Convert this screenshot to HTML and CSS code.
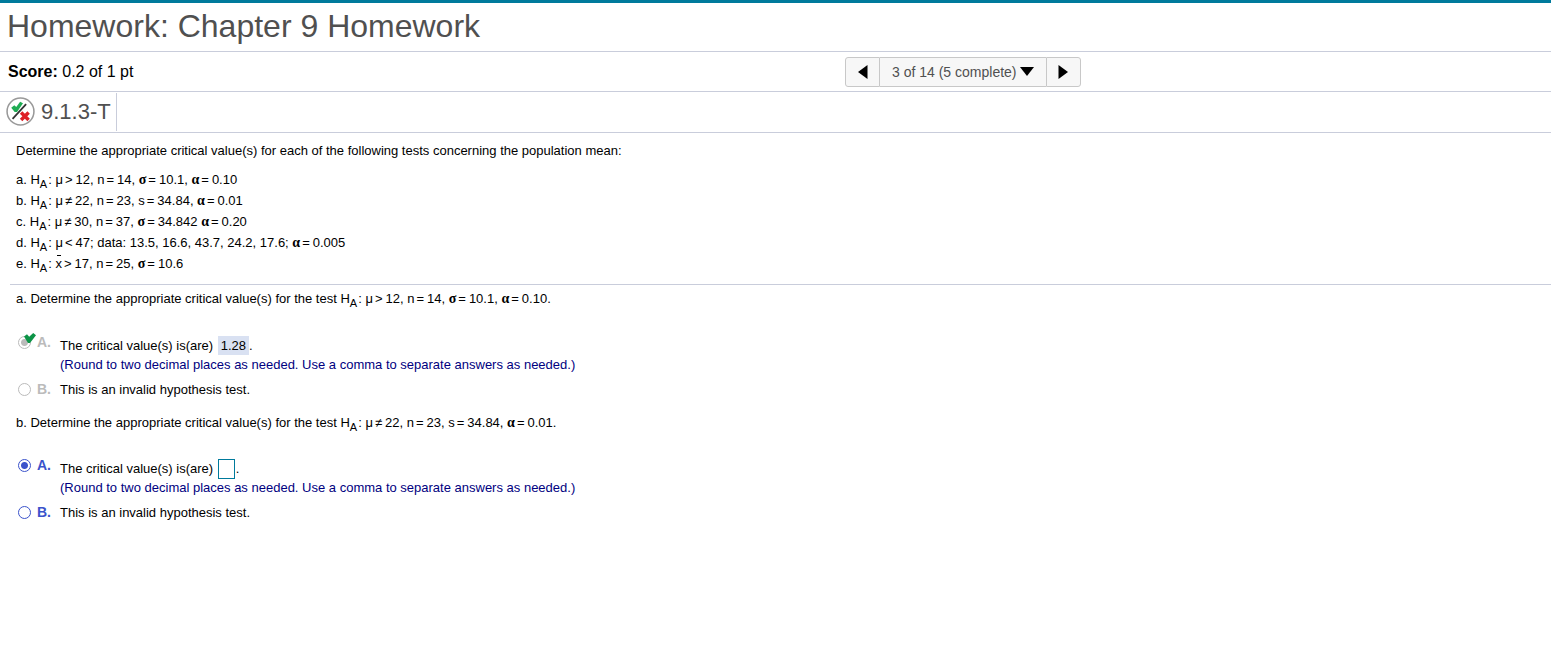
FILE: index.html
```html
<!DOCTYPE html>
<html lang="en">
<head>
<meta charset="utf-8">
<title>Homework: Chapter 9 Homework</title>
<link rel="stylesheet" href="styles.css">
</head>
<body>
<header class="title-bar"><h1>Homework: Chapter 9 Homework</h1></header>
<div class="score-bar">
  <p class="score"><b>Score:</b> 0.2 of 1 pt</p>
  <nav class="pager" aria-label="Questions">
    <button type="button" aria-label="Previous question"><svg width="10" height="14" viewBox="0 0 10 14"><path d="M9.5 0v14L0 7z"/></svg></button>
    <button type="button" class="pager-list">3 of 14 (5 complete)<svg width="14" height="9" viewBox="0 0 14 9"><path d="M0 0h14L7 9z"/></svg></button>
    <button type="button" aria-label="Next question"><svg width="10" height="14" viewBox="0 0 10 14"><path d="M.5 0v14L10 7z"/></svg></button>
  </nav>
</div>
<div class="question-bar">
  <h2 class="question-id">
    <svg width="29" height="29" viewBox="0 0 30 30" fill="none" aria-hidden="true">
      <circle cx="15" cy="15" r="13.9" fill="#fff" stroke="#999" stroke-width="1.6"/>
      <path d="M5.4 11.2l3.2-2.6 2 1.8L14.6 5l3 1.4-6.2 9H9z" fill="#20ac54"/>
      <path d="M6.8 22.6L20.8 7.4" stroke="#333" stroke-width="1.8"/>
      <path d="M15.6 16.1l7.8 7.8m0-7.8l-7.8 7.8" stroke="#de2027" stroke-width="3.6"/>
    </svg>
    <span>9.1.3-T</span>
  </h2>
</div>
<main>
  <section class="problem">
    <p class="intro">Determine the appropriate critical value(s) for each of the following tests concerning the population mean:</p>
    <p class="test">a. H<sub>A</sub>: μ<i class="op">&gt;</i>12, n<i class="op">=</i>14, <i class="greek">σ</i><i class="op">=</i>10.1, <i class="greek">α</i><i class="op">=</i>0.10</p>
    <p class="test">b. H<sub>A</sub>: μ<i class="op">≠</i>22, n<i class="op">=</i>23, s<i class="op">=</i>34.84, <i class="greek">α</i><i class="op">=</i>0.01</p>
    <p class="test">c. H<sub>A</sub>: μ<i class="op">≠</i>30, n<i class="op">=</i>37, <i class="greek">σ</i><i class="op">=</i>34.842 <i class="greek">α</i><i class="op">=</i>0.20</p>
    <p class="test">d. H<sub>A</sub>: μ<i class="op">&lt;</i>47; data: 13.5, 16.6, 43.7, 24.2, 17.6; <i class="greek">α</i><i class="op">=</i>0.005</p>
    <p class="test">e. H<sub>A</sub>: <span class="mean">x</span><i class="op">&gt;</i>17, n<i class="op">=</i>25, <i class="greek">σ</i><i class="op">=</i>10.6</p>
  </section>
  <section class="part">
    <p class="prompt">a. Determine the appropriate critical value(s) for the test H<sub>A</sub>: μ<i class="op">&gt;</i>12, n<i class="op">=</i>14, <i class="greek">σ</i><i class="op">=</i>10.1, <i class="greek">α</i><i class="op">=</i>0.10.</p>
    <div class="choice done">
      <span class="mark"><input type="radio" name="part-a" id="a1" checked disabled><svg class="check" width="12" height="11" viewBox="0 0 12 11"><path d="M0 3.4L3 1.2l2.2 2.6L9.2 0 12 2.2 6 10H4z" fill="#0c9447"/></svg></span>
      <label for="a1">A.</label>
      <div class="answer"><p>The critical value(s) is(are) <span class="value">1.28</span>.</p><p class="hint">(Round to two decimal places as needed. Use a comma to separate answers as needed.)</p></div>
    </div>
    <div class="choice done">
      <span class="mark"><input type="radio" name="part-a" id="a2" disabled></span>
      <label for="a2">B.</label>
      <p class="plain">This is an invalid hypothesis test.</p>
    </div>
  </section>
  <section class="part">
    <p class="prompt">b. Determine the appropriate critical value(s) for the test H<sub>A</sub>: μ<i class="op">≠</i>22, n<i class="op">=</i>23, s<i class="op">=</i>34.84, <i class="greek">α</i><i class="op">=</i>0.01.</p>
    <div class="choice">
      <span class="mark"><input type="radio" name="part-b" id="b1" checked></span>
      <label for="b1">A.</label>
      <div class="answer"><p>The critical value(s) is(are) <input class="entry" type="text" aria-label="Critical values">.</p><p class="hint">(Round to two decimal places as needed. Use a comma to separate answers as needed.)</p></div>
    </div>
    <div class="choice">
      <span class="mark"><input type="radio" name="part-b" id="b2"></span>
      <label for="b2">B.</label>
      <p class="plain">This is an invalid hypothesis test.</p>
    </div>
  </section>
</main>
</body>
</html>
```
FILE: styles.css
```css
* { box-sizing: border-box; }
body {
  margin: 0;
  background: #fff;
  color: #000;
  font: 13px/19px "Liberation Sans", Arial, sans-serif;
}
h1, h2, p { margin: 0; font-weight: normal; }
.title-bar {
  border-top: 3px solid #007a9c;
  border-bottom: 1px solid #c9cddb;
  padding: 5px 7px 6px;
}
h1 { font-size: 32px; line-height: 37px; color: #505050; }
.score-bar {
  display: grid;
  grid-template-columns: 845fr 706fr;
  align-items: center;
  height: 40px;
  border-bottom: 1px solid #c9cddb;
}
.score { padding-left: 8px; font-size: 16px; }
.pager { display: flex; }
.pager button {
  display: flex;
  align-items: center;
  justify-content: center;
  gap: 3px;
  width: 35px;
  height: 30px;
  padding: 0;
  border: 1px solid #c8c8c8;
  background: #f7f7f7;
  color: #505050;
  font: 14px "Liberation Sans", Arial, sans-serif;
}
.pager button:first-child { border-radius: 3px 0 0 3px; }
.pager button:last-child { border-radius: 0 3px 3px 0; }
.pager .pager-list { width: auto; padding: 0 12px; border-width: 1px 0; }
.question-bar { display: flex; height: 41px; border-bottom: 1px solid #c9cddb; }
.question-id {
  display: flex;
  align-items: center;
  gap: 6px;
  margin: 1px 0;
  padding: 0 5px 2px 6px;
  border-right: 1px solid #c9cddb;
  font-size: 22px;
  color: #505050;
}
main { padding-left: 10px; }
.problem { padding: 8px 6px 10px; border-bottom: 1px solid #c9cddb; }
.intro { margin-bottom: 9px; }
.test { line-height: 21px; }
sub { margin-right: 1px; font-size: 11px; line-height: 0; vertical-align: -4px; }
.op { margin: 0 3px 0 2px; font-style: normal; }
.greek { font: bold 14px/1 "Liberation Serif", "Times New Roman", serif; }
.mean {
  display: inline-block;
  line-height: 17px;
  background: linear-gradient(#000, #000) center top / 4px 1px no-repeat;
}
.part { padding: 4px 6px 0; }
.part + .part { padding-top: 13px; }
.choice {
  display: grid;
  grid-template-columns: 21px 23px auto;
  align-items: start;
  color: #000;
}
.prompt { margin-bottom: 24px; }
.part + .part .prompt { margin-bottom: 23px; }
.mark { display: flex; position: relative; padding: 4px 2px; }
.mark input {
  appearance: none;
  width: 13px;
  height: 13px;
  margin: 0;
  border: 1px solid #3b53cb;
  border-radius: 50%;
  background: #fff;
}
.mark input:checked { background: radial-gradient(circle, #3b53cb 3px, #fff 4px); }
.done .mark input { border-color: #bbb; }
.done .mark input:checked { background: radial-gradient(circle, #bbb 3px, #fff 4px); }
.check { position: absolute; left: 8px; top: 1px; }
.choice label { color: #3b53cb; font-weight: bold; font-size: 14px; line-height: 21px; }
.done label { color: #bbb; }
.answer { padding-top: 4px; }
.value { display: inline-block; margin-left: 1px; padding: 0 3px; background: #d9e1f2; }
.entry {
  width: 17px;
  height: 20px;
  margin: -2px 1px -2px 1px;
  padding: 0;
  border: 1px solid #007a9c;
  vertical-align: baseline;
}
.hint { color: #000080; }
.plain { padding-top: 1px; }
.choice + .choice { margin-top: 5px; }
```
